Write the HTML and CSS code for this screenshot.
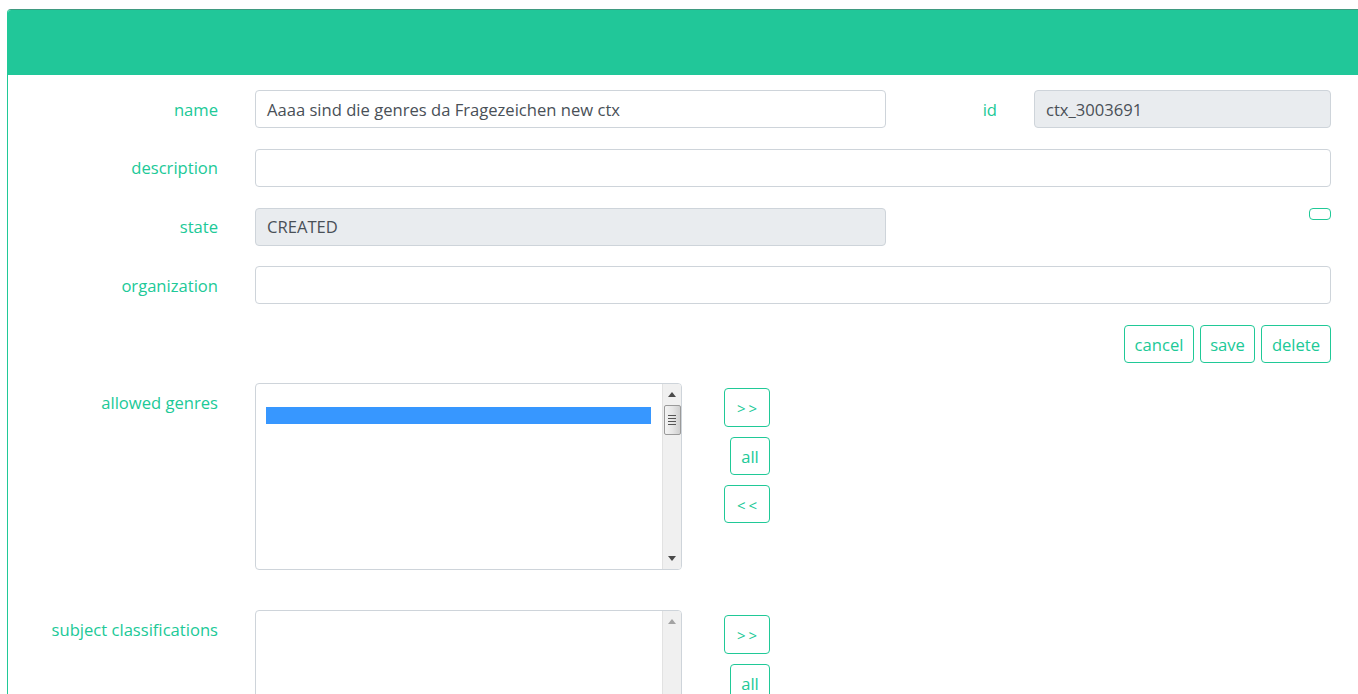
FILE: index.html
```html
<!DOCTYPE html>
<html lang="en">
<head>
<meta charset="utf-8">
<title>Context</title>
<link rel="stylesheet" href="styles.css">
</head>
<body>
<div class="card">
  <div class="card-header"></div>
  <div class="card-body">
    <div class="form-row">
      <label class="label">name</label>
      <div class="input w-half">Aaaa sind die genres da Fragezeichen new ctx</div>
      <label class="label label-id">id</label>
      <div class="input input-disabled w-id">ctx_3003691</div>
    </div>
    <div class="form-row">
      <label class="label">description</label>
      <div class="input w-full"></div>
    </div>
    <div class="form-row">
      <label class="label">state</label>
      <div class="input input-disabled w-half">CREATED</div>
      <button class="btn btn-tiny"></button>
    </div>
    <div class="form-row">
      <label class="label">organization</label>
      <div class="input w-full"></div>
    </div>
    <div class="form-row actions">
      <button class="btn btn-cancel">cancel</button>
      <button class="btn btn-save">save</button>
      <button class="btn btn-delete">delete</button>
    </div>
    <div class="form-row list-row">
      <label class="label">allowed genres</label>
      <div class="listbox">
        <div class="options">
          <div class="option"></div>
          <div class="option option-selected"></div>
        </div>
        <div class="scrollbar">
          <div class="sb-btn"><span class="tri-up"></span></div>
          <div class="sb-thumb"><span></span><span></span><span></span><span></span></div>
          <div class="sb-track"></div>
          <div class="sb-btn"><span class="tri-down"></span></div>
        </div>
      </div>
      <div class="move-col">
        <button class="btn btn-move btn-first">&gt;&gt;</button>
        <button class="btn btn-all">all</button>
        <button class="btn btn-move">&lt;&lt;</button>
      </div>
    </div>
    <div class="form-row list-row">
      <label class="label">subject classifications</label>
      <div class="listbox">
        <div class="options"></div>
        <div class="scrollbar">
          <div class="sb-btn"><span class="tri-up tri-disabled"></span></div>
          <div class="sb-track"></div>
          <div class="sb-btn"><span class="tri-down tri-disabled"></span></div>
        </div>
      </div>
      <div class="move-col">
        <button class="btn btn-move btn-first">&gt;&gt;</button>
        <button class="btn btn-all">all</button>
        <button class="btn btn-move">&lt;&lt;</button>
      </div>
    </div>
  </div>
</div>
</body>
</html>
```
FILE: styles.css
```css
html, body {
  margin: 0;
  padding: 0;
  overflow: hidden;
  background: #fff;
}
body {
  font-family: "Open Sans", "Noto Sans", "Liberation Sans", sans-serif;
  font-size: 16.6px;
  line-height: 24px;
  color: #495057;
}
.card {
  margin: 9px 0 0 7px;
  width: 1420px;
  border: 1px solid #20c997;
  border-top-color: #3f9a80;
  border-top-left-radius: 4px;
  box-sizing: border-box;
}
.card-header {
  height: 65px;
  background: #21c799;
  border-top-left-radius: 3px;
}
.card-body {
  width: 1323px;
  padding-top: 15px;
}
.form-row {
  display: flex;
  align-items: flex-start;
  margin-bottom: 20.75px;
}
.label {
  flex: none;
  width: 210px;
  margin-right: 37px;
  padding-top: 7.5px;
  line-height: 24px;
  text-align: right;
  color: #20c997;
}
.label-id {
  width: 111px;
}
.input {
  flex: none;
  box-sizing: border-box;
  height: 38px;
  padding: 6.5px 11px 5.5px;
  border: 1px solid #ced4da;
  border-radius: 4px;
  background: #fff;
  color: #495057;
  white-space: nowrap;
  overflow: hidden;
}
.input-disabled {
  background: #e9ecef;
}
.w-half { width: 631px; }
.w-full { width: 1076px; }
.w-id { width: 297px; }

.btn {
  box-sizing: border-box;
  height: 38px;
  padding: 1px 0 0;
  border: 1px solid #20c997;
  border-radius: 4px;
  background: #fff;
  color: #20c997;
  font-family: inherit;
  font-size: 16.6px;
  line-height: 24px;
  text-align: center;
}
.btn-tiny {
  margin-left: auto;
  width: 22px;
  height: 12px;
  padding: 0;
}
.actions {
  justify-content: flex-end;
  gap: 6px;
  margin-bottom: 20px;
}
.btn-cancel { width: 70px; }
.btn-save { width: 55px; }
.btn-delete { width: 70px; }

.list-row {
  margin-bottom: 40px;
}
.listbox {
  flex: none;
  box-sizing: border-box;
  width: 427px;
  height: 187px;
  border: 1px solid #ced4da;
  border-radius: 4px;
  display: flex;
  overflow: hidden;
  background: #fff;
}
.options {
  flex: 1;
  padding: 6px 11px 0 10px;
}
.option {
  height: 17px;
}
.option-selected {
  background: #3797ff;
}
.scrollbar {
  flex: none;
  width: 18px;
  border-left: 1px solid #e2e2e2;
  background: #f0f0f0;
  display: flex;
  flex-direction: column;
  align-items: center;
}
.sb-btn {
  flex: none;
  height: 21px;
  width: 100%;
  display: flex;
  align-items: center;
  justify-content: center;
}
.tri-up {
  width: 0;
  height: 0;
  border-left: 4px solid transparent;
  border-right: 4px solid transparent;
  border-bottom: 5px solid #4a4a4a;
}
.tri-down {
  width: 0;
  height: 0;
  border-left: 4px solid transparent;
  border-right: 4px solid transparent;
  border-top: 5px solid #4a4a4a;
}
.tri-disabled {
  border-bottom-color: #a3a3a3;
  border-top-color: #a3a3a3;
}
.tri-down.tri-disabled { border-bottom-color: transparent; }
.tri-up.tri-disabled { border-top-color: transparent; }
.sb-thumb {
  flex: none;
  box-sizing: border-box;
  width: 17px;
  height: 30px;
  border: 1px solid #9a9a9a;
  border-radius: 2px;
  background: linear-gradient(to right, #f4f4f4 0%, #e6e6e6 50%, #cfcfcf 100%);
  display: flex;
  flex-direction: column;
  align-items: center;
  justify-content: center;
  gap: 2px;
}
.sb-thumb span {
  display: block;
  width: 8px;
  height: 1px;
  background: #555;
}
.sb-track {
  flex: 1;
}
.move-col {
  flex: none;
  width: 88px;
  padding-top: 5px;
  display: flex;
  flex-direction: column;
  align-items: flex-end;
  gap: 10px;
}
.btn-move {
  width: 46px;
  font-size: 15px;
  letter-spacing: 3px;
  padding-left: 3px;
}
.btn-first {
  height: 39px;
}
.btn-all {
  width: 40px;
}
```
